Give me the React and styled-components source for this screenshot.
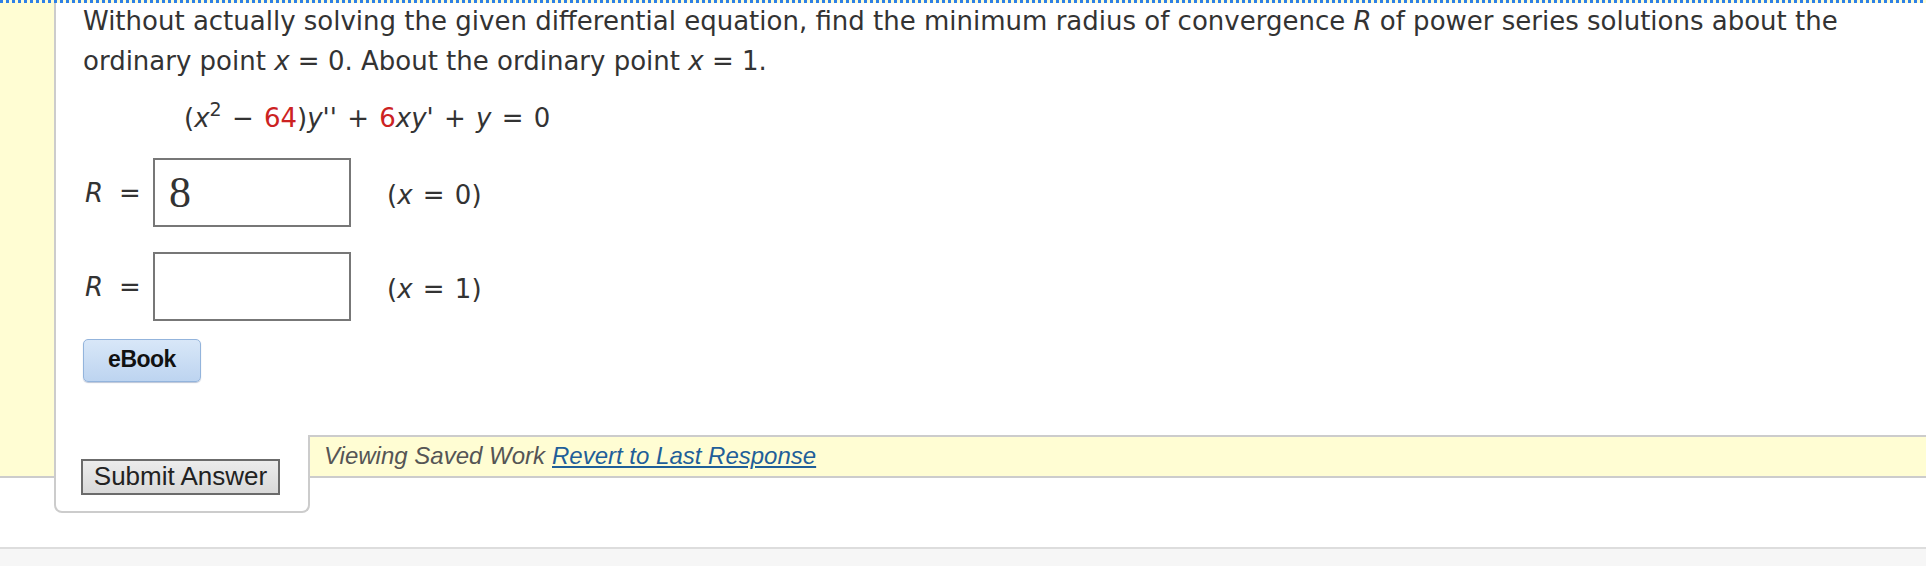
import styled, { createGlobalStyle } from "styled-components"

const GlobalStyle = createGlobalStyle`
    html, body {
        margin: 0;
        padding: 0;
        background: #ffffff;
    }
`

const Page = styled.div`
    width: 1926px;
    height: 566px;
    display: flex;
    flex-direction: column;
    overflow: hidden;
    font-family: "DejaVu Sans", Verdana, sans-serif;
    color: #333333;
`

const TopRule = styled.div`
    height: 3px;
    background: repeating-linear-gradient(90deg, #2f80e6 0px, #2f80e6 3px, transparent 3px, transparent 6px);
    background-color: #fffdd3;
`

const Question = styled.div`
    display: flex;
    align-items: stretch;
`

const Gutter = styled.div`
    width: 54px;
    flex-shrink: 0;
    background: #fffdd3;
    border-bottom: 2px solid #cccccc;
    margin-bottom: 35px;
`

const Main = styled.div`
    flex: 1;
    display: flex;
    flex-direction: column;
`

const Body = styled.div`
    background: #ffffff;
    border-left: 2px solid #cccccc;
    padding: 0 0 53px 27px;
`

const Prompt = styled.p`
    margin: -2px 0 0 0;
    font-size: 26px;
    line-height: 40px;
`

const Var = styled.i`
    font-style: italic;
`

const Equation = styled.div`
    margin: 17px 0 0 101px;
    font-size: 26px;
    line-height: 40px;
    word-spacing: 2px;
    white-space: pre;
`

const Red = styled.span`
    color: #cc2222;
`

const Sup = styled.sup`
    font-size: 19px;
    line-height: 0;
    vertical-align: 11px;
`

const AnswerRow = styled.div`
    display: flex;
    align-items: center;
    margin-top: ${props => props.$first ? '20px' : '25px'};
    font-size: 26px;
`

const Label = styled.span`
    width: 70px;
    display: inline-flex;
    align-items: center;
    padding-left: 2px;
    box-sizing: border-box;
`

const Equals = styled.span`
    margin-left: 16px;
`

const Box = styled.input`
    width: 198px;
    height: 69px;
    box-sizing: border-box;
    border: 2px solid #777777;
    padding: 0 0 0 14px;
    font-family: "Liberation Serif", "Times New Roman", serif;
    font-size: 44px;
    color: #333333;
    outline: none;
    background: #ffffff;
`

const Point = styled.span`
    margin-left: 36px;
    padding-top: 4px;
    word-spacing: 2px;
`

const EbookButton = styled.button`
    margin-top: 18px;
    width: 118px;
    height: 43px;
    box-sizing: border-box;
    border: 1px solid #93b4dc;
    border-radius: 5px;
    background: linear-gradient(#d8e7f8, #bdd4f0);
    box-shadow: 0 1px 1px rgba(60, 90, 140, 0.35);
    font-family: "Liberation Sans", Arial, sans-serif;
    font-weight: bold;
    font-size: 23px;
    letter-spacing: -0.5px;
    color: #111111;
    padding: 0 0 2px 0;
    cursor: pointer;
`

const FooterRow = styled.div`
    display: flex;
    align-items: flex-start;
`

const SubmitCell = styled.div`
    width: 256px;
    flex-shrink: 0;
    box-sizing: border-box;
    background: #ffffff;
    border: 2px solid #cccccc;
    border-top: none;
    border-radius: 0 0 8px 8px;
    padding: 24px 0 16px 25px;
`

const SubmitButton = styled.button`
    width: 199px;
    height: 36px;
    box-sizing: border-box;
    border: 2px solid #6b6b6b;
    border-radius: 0;
    background: linear-gradient(#ececec, #d9d9d9);
    font-family: "Liberation Sans", Arial, sans-serif;
    font-size: 26px;
    color: #222222;
    padding: 0 0 2px 0;
    cursor: pointer;
`

const Notice = styled.div`
    flex: 1;
    height: 43px;
    box-sizing: border-box;
    background: #fffdd3;
    border-top: 2px solid #cccccc;
    border-bottom: 2px solid #cccccc;
    display: flex;
    align-items: center;
    padding: 0 0 2px 14px;
    font-family: "Liberation Sans", Arial, sans-serif;
    font-style: italic;
    font-size: 24px;
    color: #555555;
`

const Link = styled.a`
    margin-left: 7px;
    color: #1f5f99;
    text-decoration: underline;
`

const Spacer = styled.div`
    height: 34px;
    border-bottom: 2px solid #dddddd;
`

const Footer = styled.div`
    flex: 1;
    background: #f6f6f6;
`

const App = () => {
    return (
        <Page>
            <GlobalStyle />
            <TopRule />
            <Question>
                <Gutter />
                <Main>
                    <Body>
                        <Prompt>
                            Without actually solving the given differential equation, find the minimum radius of convergence <Var>R</Var> of power series solutions about the
                            <br />
                            ordinary point <Var>x</Var> = 0. About the ordinary point <Var>x</Var> = 1.
                        </Prompt>
                        <Equation>
                            (<Var>x</Var><Sup>2</Sup> − <Red>64</Red>)<Var>y''</Var> + <Red>6</Red><Var>xy'</Var> + <Var>y</Var> = 0
                        </Equation>
                        <AnswerRow $first>
                            <Label><Var>R</Var><Equals>=</Equals></Label>
                            <Box defaultValue="8" />
                            <Point>(<Var>x</Var> = 0)</Point>
                        </AnswerRow>
                        <AnswerRow>
                            <Label><Var>R</Var><Equals>=</Equals></Label>
                            <Box defaultValue="" />
                            <Point>(<Var>x</Var> = 1)</Point>
                        </AnswerRow>
                        <EbookButton>eBook</EbookButton>
                    </Body>
                    <FooterRow>
                        <SubmitCell>
                            <SubmitButton>Submit Answer</SubmitButton>
                        </SubmitCell>
                        <Notice>
                            Viewing Saved Work<Link href="#">Revert to Last Response</Link>
                        </Notice>
                    </FooterRow>
                </Main>
            </Question>
            <Spacer />
            <Footer />
        </Page>
    )
}

export default App
